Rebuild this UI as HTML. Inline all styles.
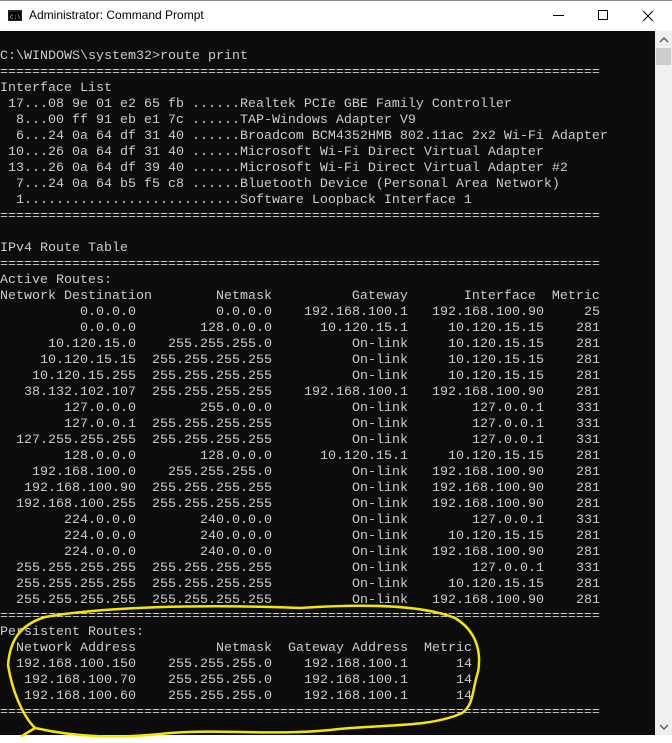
<!DOCTYPE html>
<html><head><meta charset="utf-8"><style>
body{margin:0;width:672px;height:743px;overflow:hidden;background:#fff;font-family:"Liberation Sans",sans-serif;position:relative}
#top{position:absolute;left:0;top:0;width:672px;height:1px;background:#888}
#title{position:absolute;left:29px;top:8px;font-size:12px;color:#000}
#con{position:absolute;left:0;top:31px;width:655px;height:704px;background:#0c0c0c}
pre{margin:0;position:absolute;left:0;top:49px;font-family:"Liberation Mono",monospace;font-size:13.33px;line-height:16px;color:#cccccc}
.a,.b,.c,.d,.e{display:inline-block;text-align:right}
.a{width:136px}.b{width:136px}.c{width:136px}.d{width:136px}.e{width:56px}
.f{width:64px;display:inline-block;text-align:right}
#sb{position:absolute;left:655px;top:31px;width:17px;height:704px;background:#f0f0f0}
#th{position:absolute;left:656px;top:48px;width:15px;height:17px;background:#cdcdcd}
</style></head><body>
<div id="top"></div>
<svg style="position:absolute;left:8px;top:10px" width="14" height="11"><rect x="0" y="0" width="14" height="11" fill="#222"/><rect x="1" y="2" width="12" height="8" fill="#000"/><text x="2" y="9" font-size="6" fill="#ccc" font-family="Liberation Mono">C:\</text></svg>
<div id="title">Administrator: Command Prompt</div>
<svg style="position:absolute;left:550px;top:8px" width="110" height="16"><line x1="3" y1="7.5" x2="14" y2="7.5" stroke="#000"/><rect x="48.5" y="2.5" width="9" height="9" fill="none" stroke="#000"/><path d="M93 3L103 13M103 3L93 13" stroke="#000"/></svg>
<div id="con"></div>
<div id="sb"></div><div id="th"></div>
<svg style="position:absolute;left:658px;top:35px" width="12" height="10"><path d="M2 7L6 3L10 7" stroke="#606060" stroke-width="1.5" fill="none"/></svg>
<svg style="position:absolute;left:658px;top:722px" width="12" height="10"><path d="M2 3L6 7L10 3" stroke="#606060" stroke-width="1.5" fill="none"/></svg>
<pre>C:\WINDOWS\system32>route print
===========================================================================
Interface List
 17...08 9e 01 e2 65 fb ......Realtek PCIe GBE Family Controller
  8...00 ff 91 eb e1 7c ......TAP-Windows Adapter V9
  6...24 0a 64 df 31 40 ......Broadcom BCM4352HMB 802.11ac 2x2 Wi-Fi Adapter
 10...26 0a 64 df 31 40 ......Microsoft Wi-Fi Direct Virtual Adapter
 13...26 0a 64 df 39 40 ......Microsoft Wi-Fi Direct Virtual Adapter #2
  7...24 0a 64 b5 f5 c8 ......Bluetooth Device (Personal Area Network)
  1...........................Software Loopback Interface 1
===========================================================================

IPv4 Route Table
===========================================================================
Active Routes:
Network Destination        Netmask          Gateway       Interface  Metric
<span class="a">0.0.0.0</span><span class="b">0.0.0.0</span><span class="c">192.168.100.1</span><span class="d">192.168.100.90</span><span class="e">25</span>
<span class="a">0.0.0.0</span><span class="b">128.0.0.0</span><span class="c">10.120.15.1</span><span class="d">10.120.15.15</span><span class="e">281</span>
<span class="a">10.120.15.0</span><span class="b">255.255.255.0</span><span class="c">On-link</span><span class="d">10.120.15.15</span><span class="e">281</span>
<span class="a">10.120.15.15</span><span class="b">255.255.255.255</span><span class="c">On-link</span><span class="d">10.120.15.15</span><span class="e">281</span>
<span class="a">10.120.15.255</span><span class="b">255.255.255.255</span><span class="c">On-link</span><span class="d">10.120.15.15</span><span class="e">281</span>
<span class="a">38.132.102.107</span><span class="b">255.255.255.255</span><span class="c">192.168.100.1</span><span class="d">192.168.100.90</span><span class="e">281</span>
<span class="a">127.0.0.0</span><span class="b">255.0.0.0</span><span class="c">On-link</span><span class="d">127.0.0.1</span><span class="e">331</span>
<span class="a">127.0.0.1</span><span class="b">255.255.255.255</span><span class="c">On-link</span><span class="d">127.0.0.1</span><span class="e">331</span>
<span class="a">127.255.255.255</span><span class="b">255.255.255.255</span><span class="c">On-link</span><span class="d">127.0.0.1</span><span class="e">331</span>
<span class="a">128.0.0.0</span><span class="b">128.0.0.0</span><span class="c">10.120.15.1</span><span class="d">10.120.15.15</span><span class="e">281</span>
<span class="a">192.168.100.0</span><span class="b">255.255.255.0</span><span class="c">On-link</span><span class="d">192.168.100.90</span><span class="e">281</span>
<span class="a">192.168.100.90</span><span class="b">255.255.255.255</span><span class="c">On-link</span><span class="d">192.168.100.90</span><span class="e">281</span>
<span class="a">192.168.100.255</span><span class="b">255.255.255.255</span><span class="c">On-link</span><span class="d">192.168.100.90</span><span class="e">281</span>
<span class="a">224.0.0.0</span><span class="b">240.0.0.0</span><span class="c">On-link</span><span class="d">127.0.0.1</span><span class="e">331</span>
<span class="a">224.0.0.0</span><span class="b">240.0.0.0</span><span class="c">On-link</span><span class="d">10.120.15.15</span><span class="e">281</span>
<span class="a">224.0.0.0</span><span class="b">240.0.0.0</span><span class="c">On-link</span><span class="d">192.168.100.90</span><span class="e">281</span>
<span class="a">255.255.255.255</span><span class="b">255.255.255.255</span><span class="c">On-link</span><span class="d">127.0.0.1</span><span class="e">331</span>
<span class="a">255.255.255.255</span><span class="b">255.255.255.255</span><span class="c">On-link</span><span class="d">10.120.15.15</span><span class="e">281</span>
<span class="a">255.255.255.255</span><span class="b">255.255.255.255</span><span class="c">On-link</span><span class="d">192.168.100.90</span><span class="e">281</span>
===========================================================================
Persistent Routes:
  Network Address<span class="a">Netmask</span><span class="c">Gateway Address</span><span class="f">Metric</span>
<span class="a">192.168.100.150</span><span class="b">255.255.255.0</span><span class="c">192.168.100.1</span><span class="f">14</span>
<span class="a">192.168.100.70</span><span class="b">255.255.255.0</span><span class="c">192.168.100.1</span><span class="f">14</span>
<span class="a">192.168.100.60</span><span class="b">255.255.255.0</span><span class="c">192.168.100.1</span><span class="f">14</span>
===========================================================================
</pre>
<svg style="position:absolute;left:0;top:0" width="672" height="743"><path d="M300 608C360 604 420 604 455 618C475 630 482 650 478 672C472 690 474 705 462 713C430 728 380 724 330 730C270 736 210 728 160 734C120 738 80 738 35 728C22 715 12 690 8 665C10 640 20 625 45 617C100 607 200 604 300 608M35 728L22 736" fill="none" stroke="#f5e600" stroke-width="2.5" stroke-linecap="round"/></svg>
</body></html>
